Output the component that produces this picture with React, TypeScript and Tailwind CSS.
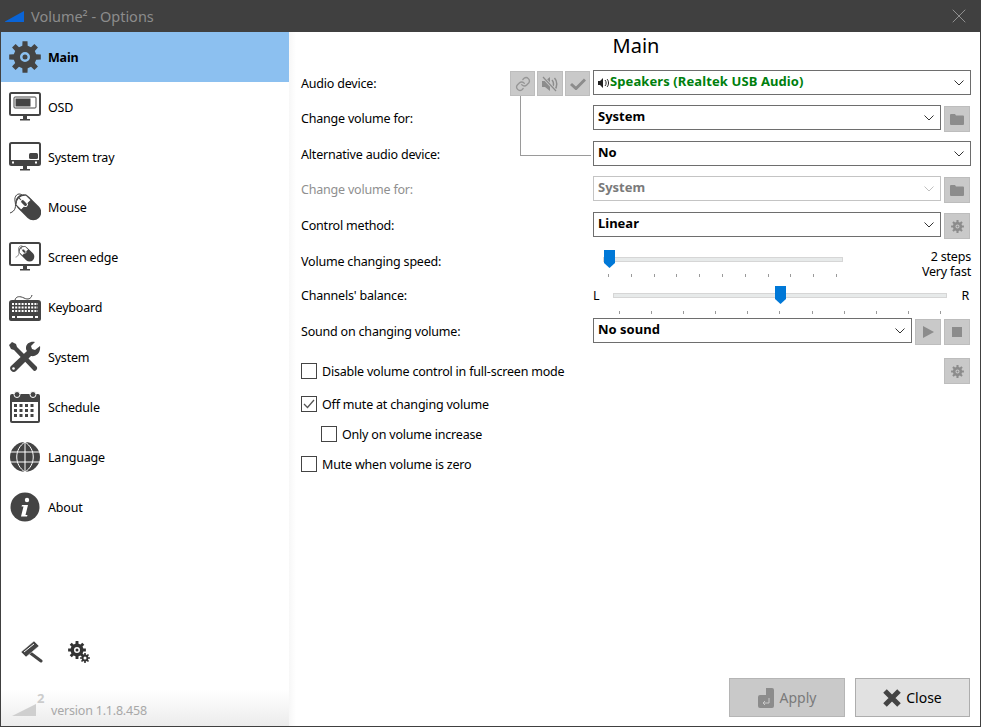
import type { ReactNode } from 'react';
import { X } from 'lucide-react';

const DARK = '#444444';

const gearPath = (cx: number, cy: number, outer: number, inner: number, hole: number, teeth = 8) => {
  const pts: string[] = [];
  const step = (Math.PI * 2) / teeth;
  for (let i = 0; i < teeth; i++) {
    const a = i * step - Math.PI / 2;
    const w = step * 0.2;
    const v = step * 0.3;
    const p = (r: number, t: number) =>
      `${(cx + r * Math.cos(t)).toFixed(2)} ${(cy + r * Math.sin(t)).toFixed(2)}`;
    pts.push(p(inner, a - v), p(outer, a - w), p(outer, a + w), p(inner, a + v));
  }
  const ring = `M${pts.join('L')}Z`;
  return `${ring}M${cx - hole} ${cy}a${hole} ${hole} 0 1 0 ${hole * 2} 0a${hole} ${hole} 0 1 0 ${-hole * 2} 0Z`;
};

function Gear({ size = 32, color = DARK }: { size?: number; color?: string }) {
  return (
    <svg width={size} height={size} viewBox="0 0 32 32">
      <path d={gearPath(16, 16, 16, 11.5, 5)} fill={color} fillRule="evenodd" />
      <circle cx="16" cy="16" r="2.5" fill={color} />
    </svg>
  );
}

function Monitor({ children }: { children?: ReactNode }) {
  return (
    <svg width="32" height="32" viewBox="0 0 32 32">
      <rect x="1" y="2" width="30" height="22" rx="1.5" fill="#fff" stroke={DARK} strokeWidth="2" />
      <path d="M14 24h4v4h3v1.5H11V28h3z" fill={DARK} />
      {children}
    </svg>
  );
}

function MouseShape({ scale = 1, x = 0, y = 0 }: { scale?: number; x?: number; y?: number }) {
  return (
    <g transform={`translate(${x} ${y}) scale(${scale})`}>
      <path d="M13 4C9 1 5 5 6 10c1 5 1 10-5 12" fill="none" stroke={DARK} strokeWidth="1" />
      <g transform="rotate(-45 20 17)">
        <rect x="12" y="1" width="16" height="30" rx="8" fill={DARK} />
        <path d="M13 5.500Q20-1 27 5.500V13H13z" fill="#fff" stroke={DARK} />
        <path d="M20 2v11" stroke={DARK} strokeWidth="1" />
        <rect x="18" y="6" width="4" height="8" rx="2" fill={DARK} stroke="#fff" />
      </g>
    </g>
  );
}

const navItems: { label: string; icon: ReactNode }[] = [
  { label: 'Main', icon: <Gear /> },
  {
    label: 'OSD',
    icon: (
      <Monitor>
        <rect x="5" y="6" width="22" height="11" rx="1" fill="none" stroke={DARK} />
        <rect x="6.500" y="7.500" width="15" height="8" fill={DARK} />
      </Monitor>
    ),
  },
  {
    label: 'System tray',
    icon: (
      <Monitor>
        <path d="M2 19h28v5H2z" fill={DARK} />
        <rect x="20" y="12" width="9" height="6" rx="1.500" fill={DARK} />
        <rect x="3" y="20.500" width="2" height="2" fill="#fff" />
        <rect x="26" y="20.500" width="2" height="2" fill="#fff" />
      </Monitor>
    ),
  },
  {
    label: 'Mouse',
    icon: (
      <svg width="32" height="32" viewBox="0 0 32 32">
        <MouseShape />
      </svg>
    ),
  },
  {
    label: 'Screen edge',
    icon: (
      <Monitor>
        <MouseShape scale={0.6} x={6} y={3} />
      </Monitor>
    ),
  },
  {
    label: 'Keyboard',
    icon: (
      <svg width="32" height="32" viewBox="0 0 32 32">
        <path d="M6 9c1-4 5-4 9-2 4 2 7 1 8-3" fill="none" stroke={DARK} strokeWidth="1" />
        <path d="M3 9h26a3 3 0 0 1 3 3v16a2 2 0 0 1-2 2H2a2 2 0 0 1-2-2V12a3 3 0 0 1 3-3z" fill={DARK} />
        <path d="M3 13h26M3 16.500h26M3 20h26" stroke="#fff" strokeWidth="2" strokeDasharray="2 1.200" />
        <path d="M3 26h3M8 26h16M26 26h3" stroke="#fff" strokeWidth="2" />
      </svg>
    ),
  },
  {
    label: 'System',
    icon: (
      <svg width="32" height="32" viewBox="0 0 32 32">
        <path d="M3 1l4 2 1 3 20 20a3 3 0 0 1-3 4L5 9 2 8 0 4z" fill={DARK} />
        <path
          d="M31 5l-5 4-3-1-1-3 4-4c-4-1-9 1-9 6 0 1 0 2 1 3L2 25c-3 3 2 8 5 5l15-15c5 1 10-3 9-10z"
          fill={DARK}
        />
        <circle cx="4.500" cy="27.500" r="1.300" fill="#fff" />
      </svg>
    ),
  },
  {
    label: 'Schedule',
    icon: (
      <svg width="32" height="32" viewBox="0 0 32 32">
        <rect x="1" y="3" width="30" height="29" rx="2" fill={DARK} />
        <rect x="3" y="11" width="26" height="19" fill="#fff" />
        <circle cx="8" cy="3.500" r="3" fill={DARK} stroke="#fff" />
        <circle cx="24" cy="3.500" r="3" fill={DARK} stroke="#fff" />
        <path d="M5 14.500h22M5 19.500h22M5 24.500h22" stroke={DARK} strokeWidth="3" strokeDasharray="3 2.500" />
      </svg>
    ),
  },
  {
    label: 'Language',
    icon: (
      <svg width="32" height="32" viewBox="0 0 32 32">
        <circle cx="16" cy="16" r="15" fill={DARK} />
        <path
          d="M0 11h32M0 21h32M16 0v32M16 1C5 8 5 24 16 31M16 1c11 7 11 23 0 30"
          fill="none"
          stroke="#fff"
          strokeWidth="1"
        />
      </svg>
    ),
  },
  {
    label: 'About',
    icon: (
      <svg width="32" height="32" viewBox="0 0 32 32">
        <circle cx="16" cy="16" r="14.500" fill={DARK} />
        <circle cx="18" cy="9" r="2.200" fill="#fff" />
        <path d="M13 14h6l-2.500 10h2l-.5 1.500h-6l2.500-10h-2z" fill="#fff" />
      </svg>
    ),
  },
];

function Chevron({ disabled }: { disabled?: boolean }) {
  return (
    <svg width="10" height="6" viewBox="0 0 10 6" className="shrink-0">
      <path d="M.5.5 5 5 9.500.5" fill="none" stroke={disabled ? '#c0c0c0' : '#333333'} />
    </svg>
  );
}

function Combo({
  children,
  width,
  disabled,
}: {
  children: ReactNode;
  width: string;
  disabled?: boolean;
}) {
  return (
    <div
      className={`${width} flex h-[25px] items-center justify-between border pl-1 pr-[6px] text-[13px] font-bold ${
        disabled ? 'border-[#c4c4c4] text-[#7a7a7a]' : 'border-[#6e6e6e] text-black'
      }`}>
      <div className="mb-[2px] flex items-center">{children}</div>
      <Chevron disabled={disabled} />
    </div>
  );
}

function ToolButton({
  children,
  size = 'h-[26px] w-[26px]',
  className = '',
}: {
  children: ReactNode;
  size?: string;
  className?: string;
}) {
  return (
    <div className={`flex items-center justify-center border border-[#bdbdbd] bg-[#c9c9c9] ${size} ${className}`}>
      {children}
    </div>
  );
}

const FolderIcon = () => (
  <svg width="14" height="11" viewBox="0 0 14 11">
    <path d="M0 1a1 1 0 0 1 1-1h4l1 1.500h7a1 1 0 0 1 1 1V10a1 1 0 0 1-1 1H1a1 1 0 0 1-1-1z" fill="#8c8c8c" />
  </svg>
);

const SmallGear = () => <Gear size={13} color="#8c8c8c" />;

const bodyText = 'text-[12.5px] tracking-[-0.2px]';

function Row({
  label,
  disabled,
  className = '',
  children,
}: {
  label: string;
  disabled?: boolean;
  className?: string;
  children: ReactNode;
}) {
  return (
    <div className={`flex h-[25px] items-start ${className}`}>
      <span className={`w-[292px] shrink-0 leading-[27px] ${bodyText} ${disabled ? 'text-[#8f8f8f]' : 'text-black'}`}>
        {label}
      </span>
      {children}
    </div>
  );
}

function Slider({ percent }: { percent: number }) {
  return (
    <div className="relative h-[5px] border border-[#d6d6d6] bg-[#e7eaea]">
      <svg
        width="11"
        height="18"
        viewBox="0 0 11 18"
        className="absolute top-[-8px] -ml-[5px]"
        style={{ left: `${percent}%` }}>
        <path d="M0 0h11v13l-5.500 5L0 13z" fill="#0078d7" />
      </svg>
    </div>
  );
}

function Ticks({ className }: { className: string }) {
  return (
    <div className={`flex justify-between ${className}`}>
      {Array.from({ length: 11 }).map((_, i) => (
        <span key={i} className="h-[3px] w-px bg-[#9a9a9a]" />
      ))}
    </div>
  );
}

function Check({
  label,
  checked,
  className = '',
}: {
  label: string;
  checked?: boolean;
  className?: string;
}) {
  return (
    <label className={`flex h-4 items-center gap-[5px] text-black ${bodyText} ${className}`}>
      <span className="flex h-4 w-4 items-center justify-center border border-[#444444] bg-white">
        {checked && (
          <svg width="12" height="10" viewBox="0 0 12 10">
            <path d="M1 5l3.500 3.500L11 1" fill="none" stroke="#555555" strokeWidth="1.300" />
          </svg>
        )}
      </span>
      <span className="mt-[2px]">{label}</span>
    </label>
  );
}

export default function App() {
  return (
    <div className="flex h-[727px] w-[981px] flex-col overflow-hidden font-['Noto_Sans',sans-serif]">
      <div className="flex h-8 shrink-0 items-center bg-[#404040] pl-[5px] pr-[10px]">
        <svg width="19" height="11" viewBox="0 0 19 11">
          <path d="M0 10.500 19 0v11H0z" fill="#0a64d6" />
        </svg>
        <span className="ml-[7px] mt-[1px] text-[14.5px] text-[#8c8c8c]">Volume² - Options</span>
        <X size={24} strokeWidth={0.9} color="#9a9a9a" className="ml-auto" />
      </div>

      <div className="flex min-h-0 flex-1 border-x border-b border-[#404040] bg-[linear-gradient(to_bottom,#ffffff_658px,#ececec_100%)]">
        <aside className="flex w-[288px] shrink-0 flex-col">
          {navItems.map((item, i) => (
            <div
              key={item.label}
              className={`flex h-[50px] shrink-0 items-center gap-[7px] pl-2 text-black ${bodyText} ${
                i === 0 ? 'bg-[#8cc0f0] font-bold' : ''
              }`}>
              {item.icon}
              <span className="mt-[2px]">{item.label}</span>
            </div>
          ))}

          <div className="mt-[109px] flex gap-[25px] pl-5">
            <svg width="22" height="22" viewBox="0 0 22 22">
              <path d="M8 11 20 20" stroke={DARK} strokeWidth="3" strokeLinecap="round" />
              <path d="M0 11 13 0l5 5L5 16z" fill={DARK} stroke="#fff" strokeWidth="0.500" />
              <path d="M3 11 13 3" stroke="#fff" strokeWidth="1" />
            </svg>
            <svg width="22" height="22" viewBox="0 0 22 22">
              <path d={gearPath(9, 9, 9, 6.5, 3)} fill="#333333" fillRule="evenodd" />
              <circle cx="9" cy="9" r="1.500" fill="#333333" />
              <path d={gearPath(17, 17, 5, 3.5, 1.5)} fill="#333333" fillRule="evenodd" />
            </svg>
          </div>

          <div className="mt-auto flex items-end pb-[10px] pl-[11px]">
            <div className="relative h-[22px] w-[39px]">
              <svg width="24" height="12" viewBox="0 0 24 12" className="absolute bottom-0 left-0">
                <path d="M0 12 24 0v12z" fill="#cfcfcf" />
              </svg>
              <span className="absolute left-[25px] top-[-2px] text-[13px] leading-[12px] font-bold text-[#cccccc]">2</span>
            </div>
            <span className={`-mb-[4px] leading-[18px] text-[#a8a8a8] ${bodyText}`}>version 1.1.8.458</span>
          </div>
        </aside>

        <main className="relative flex min-w-0 flex-1 flex-col bg-[linear-gradient(to_right,#f7f7f7,#ffffff_7px)] pl-[12px] pr-[9px]">
          <h1 className="h-[38px] text-center text-[20px] leading-[28px] font-normal text-black">Main</h1>

          <Row label="Audio device:">
            <div className="-ml-[83px] mr-[3px] mt-[1px] flex gap-[2px]">
              <ToolButton size="h-[25px] w-[25px]">
                <svg width="16" height="16" viewBox="0 0 24 24" fill="none" stroke="#969696" strokeWidth="2" strokeLinecap="round">
                  <path d="M10 13a5 5 0 0 0 7.500.5l3-3a5 5 0 0 0-7-7l-1.700 1.700" />
                  <path d="M14 11a5 5 0 0 0-7.500-.5l-3 3a5 5 0 0 0 7 7l1.700-1.700" />
                </svg>
              </ToolButton>
              <ToolButton size="h-[25px] w-[26px]">
                <svg width="18" height="16" viewBox="0 0 18 16">
                  <path d="M1 5h3l5-4v14l-5-4H1z" fill="#8c8c8c" />
                  <path d="M11 4c2 2 2 6 0 8M13.500 2c3 3 3 9 0 12" fill="none" stroke="#8c8c8c" strokeWidth="1.500" />
                  <path d="M2 1l13 14" stroke="#c9c9c9" strokeWidth="3" />
                  <path d="M2 1l13 14" stroke="#8c8c8c" strokeWidth="1.200" />
                </svg>
              </ToolButton>
              <ToolButton size="h-[25px] w-[25px]">
                <svg width="16" height="12" viewBox="0 0 16 12">
                  <path d="M1 6l5 4.500L15 1.500" fill="none" stroke="#8c8c8c" strokeWidth="3" />
                </svg>
              </ToolButton>
            </div>
            <Combo width="w-[378px]">
              <svg width="12" height="10" viewBox="0 0 12 10" className="mt-[2px]">
                <path d="M0 3h2l3-3v10L2 7H0z" fill="#222222" />
                <path d="M7 2c1.500 1.500 1.500 4.500 0 6M9 1c2 2 2 6 0 8" fill="none" stroke="#222222" />
              </svg>
              <span className="tracking-[0.1px] text-[#007f0e]">Speakers (Realtek USB Audio)</span>
            </Combo>
          </Row>

          <Row label="Change volume for:" className="mt-[10px]">
            <Combo width="w-[348px]">System</Combo>
            <ToolButton className="ml-[3px] mt-[1px]">
              <FolderIcon />
            </ToolButton>
          </Row>

          <Row label="Alternative audio device:" className="mt-[11px]">
            <Combo width="w-[378px]">No</Combo>
          </Row>

          <Row label="Change volume for:" disabled className="mt-[10px]">
            <Combo width="w-[348px]" disabled>
              System
            </Combo>
            <ToolButton className="ml-[3px] mt-[1px]">
              <FolderIcon />
            </ToolButton>
          </Row>

          <Row label="Control method:" className="mt-[11px]">
            <Combo width="w-[348px]">Linear</Combo>
            <ToolButton className="ml-[3px] mt-[1px]">
              <SmallGear />
            </ToolButton>
          </Row>

          <div className="mt-[11px] flex h-[38px] items-start">
            <span className={`mt-[4px] w-[292px] shrink-0 leading-[20px] text-black ${bodyText}`}>
              Volume changing speed:
            </span>
            <div className="ml-[10px] mt-[9px] w-[240px]">
              <Slider percent={2} />
              <Ticks className="mt-[12px] pl-[5px] pr-[6px]" />
            </div>
            <div className={`ml-auto mt-[1px] text-right leading-[15px] text-black ${bodyText}`}>
              <div>2 steps</div>
              <div>Very fast</div>
            </div>
          </div>

          <div className="flex h-[32px] items-start">
            <span className={`w-[292px] shrink-0 leading-[20px] text-black ${bodyText}`}>Channels' balance:</span>
            <span className={`w-[20px] shrink-0 leading-[20px] text-black ${bodyText}`}>L</span>
            <div className="mt-[7px] w-[334px]">
              <Slider percent={50} />
              <Ticks className="mt-[13px] pl-[6px] pr-[6px]" />
            </div>
            <span className={`ml-auto pr-[2px] leading-[20px] text-black ${bodyText}`}>R</span>
          </div>

          <Row label="Sound on changing volume:">
            <Combo width="w-[319px]">No sound</Combo>
            <ToolButton className="ml-[3px] mt-[1px]">
              <svg width="11" height="12" viewBox="0 0 11 12">
                <path d="M0 0l11 6-11 6z" fill="#8c8c8c" />
              </svg>
            </ToolButton>
            <ToolButton className="ml-[3px] mt-[1px]">
              <span className="h-[10px] w-[10px] bg-[#8c8c8c]" />
            </ToolButton>
          </Row>

          <div className="mt-[15px] flex items-center justify-between pr-[1px]">
            <Check label="Disable volume control in full-screen mode" />
            <ToolButton>
              <SmallGear />
            </ToolButton>
          </div>

          <Check label="Off mute at changing volume" checked className="mt-[12px]" />
          <Check label="Only on volume increase" className="ml-[20px] mt-[14px]" />
          <Check label="Mute when volume is zero" className="mt-[14px]" />

          <div className="mt-auto mb-[9px] mr-[1px] flex justify-end gap-[10px]">
            <button className="flex h-[39px] w-[116px] items-center justify-center gap-[6px] border border-[#b5b5b5] bg-[#c9c9c9] text-[14px] text-[#7a7a7a]">
              <svg width="16" height="20" viewBox="0 0 16 20">
                <path d="M8 0h6a2 2 0 0 1 2 2v16a2 2 0 0 1-2 2H2a2 2 0 0 1-2-2V9a2 2 0 0 1 2-2h6z" fill="#8c8c8c" />
                <path d="M11 10v5H5M7 13l-2 2 2 2" fill="none" stroke="#c9c9c9" />
              </svg>
              Apply
            </button>
            <button className="flex h-[39px] w-[115px] items-center justify-center gap-[5px] border border-[#adadad] bg-[#e1e1e1] text-[14px] text-black">
              <svg width="18" height="18" viewBox="0 0 18 18">
                <path d="M2 2 16 16M16 2 2 16" stroke="#444444" strokeWidth="5" />
              </svg>
              Close
            </button>
          </div>

          {/* connector from the link button to the alternative device combo */}
          <div className="absolute left-[231px] top-[64px] h-[60px] w-[71px] border-b border-l border-[#9a9a9a]" />
        </main>
      </div>
    </div>
  );
}
